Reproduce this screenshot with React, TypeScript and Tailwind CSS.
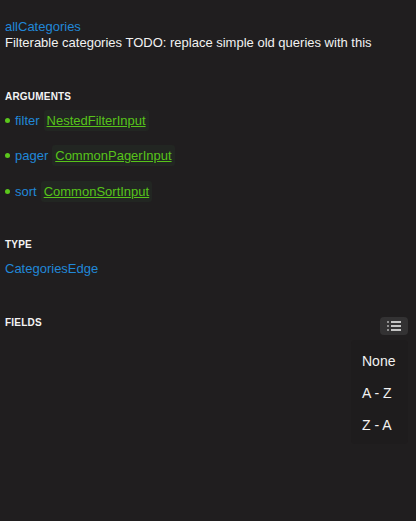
import React from "react";

const ARGS = [
  { name: "filter", type: "NestedFilterInput" },
  { name: "pager", type: "CommonPagerInput" },
  { name: "sort", type: "CommonSortInput" },
];

function SectionTitle({ children }: { children: React.ReactNode }) {
  return (
    <div className="text-[10px] leading-[12px] font-bold uppercase text-[#f4f4f4] tracking-[0.2px]">
      {children}
    </div>
  );
}

function SortIcon() {
  return (
    <svg width="14" height="12" viewBox="0 0 14 12">
      <rect x="0" y="1" width="2" height="2" fill="#8f8f8f" />
      <rect x="4" y="1" width="10" height="2" fill="#c4c4c4" />
      <rect x="0" y="5" width="2" height="2" fill="#8f8f8f" />
      <rect x="4" y="5" width="10" height="2" fill="#c4c4c4" />
      <rect x="0" y="9" width="2" height="2" fill="#8f8f8f" />
      <rect x="4" y="9" width="10" height="2" fill="#c4c4c4" />
    </svg>
  );
}

export default function App() {
  return (
    <div className="relative w-[416px] h-[521px] overflow-hidden bg-[#201e1f] px-[5px] pt-[19px] font-['Liberation_Sans',Arial,sans-serif] text-[13px]">
      <div className="leading-[16px] text-[#2188d8]">allCategories</div>
      <div className="leading-[16px] text-[#f2f2f2]">
        Filterable categories TODO: replace simple old queries with this
      </div>

      <div className="mt-[40px]">
        <SectionTitle>Arguments</SectionTitle>
      </div>
      <div className="mt-[6.9px] flex flex-col gap-[14.5px]">
        {ARGS.map((arg) => (
          <div key={arg.name} className="flex h-[21px] items-center">
            <span className="w-[5px] h-[5px] rounded-full bg-[#5bc71c]" />
            <span className="ml-[5px] text-[#2188d8]">{arg.name}</span>
            <span className="ml-[4px] px-[3px] h-[21px] leading-[21px] rounded-[3px] bg-[#222622] text-[#57c41a] underline">
              {arg.type}
            </span>
          </div>
        ))}
      </div>

      <div className="mt-[37.1px]">
        <SectionTitle>Type</SectionTitle>
      </div>
      <div className="mt-[10px] leading-[16px] text-[#2188d8]">CategoriesEdge</div>

      <div className="mt-[40px] flex items-center justify-between pr-[3px]">
        <SectionTitle>Fields</SectionTitle>
      </div>

      <button className="absolute left-[380px] top-[317px] w-[28px] h-[18px] rounded-[4px] bg-[#333233] flex items-center justify-center">
        <SortIcon />
      </button>
      <div className="absolute left-[351px] top-[340px] w-[57px] h-[104px] rounded-[4px] bg-[#1e1c1d] pl-[11px] pt-[5px] text-[14px] text-[#f2f2f2]">
        <div className="h-[32px] leading-[32px]">None</div>
        <div className="h-[32px] leading-[32px]">A - Z</div>
        <div className="h-[32px] leading-[32px]">Z - A</div>
      </div>
    </div>
  );
}
